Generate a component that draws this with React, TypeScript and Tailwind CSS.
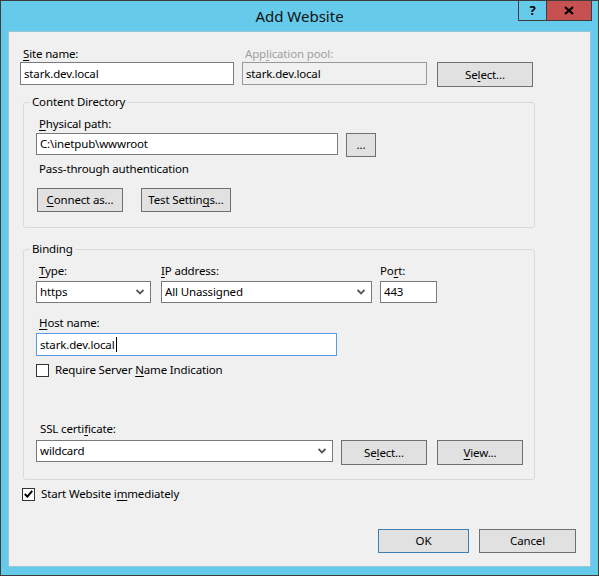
import type { ReactNode } from "react";

const font = { fontFamily: '"Noto Sans", "Open Sans", Arial, sans-serif' };

function U({ children }: { children: ReactNode }) {
  return <span className="underline underline-offset-2">{children}</span>;
}

function Button({
  children,
  className = "",
  primary = false,
}: {
  children: ReactNode;
  className?: string;
  primary?: boolean;
}) {
  return (
    <button
      type="button"
      className={`flex items-center justify-center border bg-[#e1e1e1] text-[11.5px] leading-none tracking-[-0.15px] text-black ${
        primary ? "border-[#3c7fb1]" : "border-[#707070]"
      } ${className}`}
    >
      {children}
    </button>
  );
}

function TextBox({
  value,
  className = "",
  disabled = false,
  focused = false,
}: {
  value: string;
  className?: string;
  disabled?: boolean;
  focused?: boolean;
}) {
  return (
    <div
      className={`flex items-center border pl-[3px] text-black ${
        disabled ? "border-[#9a9a9a] bg-[#f0f0f0]" : "bg-white"
      } ${focused ? "border-[#569de5]" : disabled ? "" : "border-[#7a7a7a]"} ${className}`}
    >
      <span>{value}</span>
      {focused && <span className="ml-px h-[15px] w-px bg-black" />}
    </div>
  );
}

function Combo({ value, className = "" }: { value: string; className?: string }) {
  return (
    <div
      className={`flex items-center justify-between border border-[#7a7a7a] bg-white pl-[3px] pr-[6px] text-black ${className}`}
    >
      <span>{value}</span>
      <svg width="8" height="6" viewBox="0 0 8 6" aria-hidden="true">
        <path d="M0.5 1 L4 4.5 L7.5 1" fill="none" stroke="#555" strokeWidth="1.8" />
      </svg>
    </div>
  );
}

function CheckBox({ checked = false }: { checked?: boolean }) {
  return (
    <span className="flex h-[13px] w-[13px] shrink-0 items-center justify-center border border-[#333] bg-white">
      {checked && (
        <svg width="9" height="8" viewBox="0 0 9 8" aria-hidden="true">
          <path d="M0.8 4 L3.4 6.6 L8.2 0.8" fill="none" stroke="#000" strokeWidth="2" />
        </svg>
      )}
    </span>
  );
}

// Win8-style group box: a fieldset whose legend sits on the top border
function Group({ title, children, className = "" }: { title: string; children: ReactNode; className?: string }) {
  return (
    <fieldset className={`ml-[14px] w-[512px] rounded-[3px] border border-[#d9d9d9] ${className}`}>
      <legend className="-ml-[6px] px-[2px] leading-4 text-black">{title}</legend>
      {children}
    </fieldset>
  );
}

export default function App() {
  return (
    <div className="h-[576px] w-[599px] bg-white" style={font}>
      <div className="flex h-[576px] w-[599px] flex-col border border-[#3d3d3d] bg-[#66cbea]">
        {/* title bar */}
        <div className="grid h-[30px] grid-cols-[1fr_auto_1fr]">
          <div />
          <div className="pt-[5px] text-[15px] leading-5 text-[#111]">Add Website</div>
          <div className="flex items-start justify-end pr-[6px]">
            <div className="flex h-[20px] w-[28px] items-center justify-center border-b border-l border-[#3d3d3d] text-[13px] font-bold leading-none text-black">
              ?
            </div>
            <div className="flex h-[20px] w-[46px] items-center justify-center border-x border-b border-[#3d3d3d] bg-[#c75050]">
              <svg width="10" height="9" viewBox="0 0 10 9" aria-hidden="true">
                <path d="M1 1 L9 8 M9 1 L1 8" stroke="#000" strokeWidth="2.2" />
              </svg>
            </div>
          </div>
        </div>

        {/* client area */}
        <div className="mx-[7px] h-[536px] border border-[#9cc3d6] bg-[#f0f0f0] text-[11.5px] tracking-[-0.15px] text-black">
          <div className="flex items-start pl-[11px] pt-[14px]">
            <div className="flex w-[214px] flex-col">
              <div className="h-4 pl-[3px] leading-4">
                <U>S</U>ite name:
              </div>
              <TextBox value="stark.dev.local" className="h-[23px] w-[214px]" />
            </div>
            <div className="ml-[8px] flex w-[185px] flex-col">
              <div className="h-4 pl-[3px] leading-4 text-[#a0a0a0]">
                App<U>l</U>ication pool:
              </div>
              <TextBox value="stark.dev.local" disabled className="h-[23px] w-[185px]" />
            </div>
            <Button className="ml-[10px] mt-4 h-[25px] w-[96px]">
              Se<U>l</U>ect...
            </Button>
          </div>

          <Group title="Content Directory" className="mt-[7px] pb-[15px] pl-[12px]">
            <div className="mt-[6px] h-4 pl-[3px] leading-4">
              <U>P</U>hysical path:
            </div>
            <div className="mt-px flex items-start gap-[8px]">
              <TextBox value="C:\inetpub\wwwroot" className="h-[22px] w-[302px]" />
              <Button className="h-[24px] w-[30px]">...</Button>
            </div>
            <div className="mt-[4px] h-4 pl-[3px] leading-4">Pass-through authentication</div>
            <div className="ml-px mt-[11px] flex gap-[18px]">
              <Button className="h-[24px] w-[86px]">
                <U>C</U>onnect as...
              </Button>
              <Button className="h-[24px] w-[90px]">
                Test Settin<U>g</U>s...
              </Button>
            </div>
          </Group>

          <Group title="Binding" className="mt-[13px] pb-[14px] pl-[12px]">
            <div className="mt-[6px] flex items-start">
              <div className="flex w-[115px] flex-col">
                <div className="h-4 pl-[3px] leading-4">
                  <U>T</U>ype:
                </div>
                <Combo value="https" className="mt-[2px] h-[22px] w-[115px]" />
              </div>
              <div className="ml-[10px] flex w-[211px] flex-col">
                <div className="h-4 leading-4">
                  <U>I</U>P address:
                </div>
                <Combo value="All Unassigned" className="mt-[2px] h-[22px] w-[211px]" />
              </div>
              <div className="ml-[8px] flex w-[57px] flex-col">
                <div className="h-4 leading-4">
                  Po<U>r</U>t:
                </div>
                <TextBox value="443" className="mt-[2px] h-[22px] w-[57px]" />
              </div>
            </div>
            <div className="mt-[12px] h-4 pl-[3px] leading-4">
              <U>H</U>ost name:
            </div>
            <TextBox value="stark.dev.local" focused className="mt-[2px] h-[23px] w-[301px]" />
            <div className="mt-[6px] flex h-4 items-center gap-[6px]">
              <CheckBox />
              <span>
                Require Server <U>N</U>ame Indication
              </span>
            </div>
            <div className="mt-[43px] h-4 pl-[4px] leading-4">
              SSL certi<U>f</U>icate:
            </div>
            <div className="mt-[3px] flex items-start">
              <Combo value="wildcard" className="h-[22px] w-[297px]" />
              <Button className="ml-[8px] h-[25px] w-[86px]">
                Se<U>l</U>ect...
              </Button>
              <Button className="ml-[10px] h-[25px] w-[86px]">
                <U>V</U>iew...
              </Button>
            </div>
          </Group>

          <div className="ml-[13px] mt-[6px] flex h-4 items-center gap-[6px]">
            <CheckBox checked />
            <span>
              Start Website i<U>m</U>mediately
            </span>
          </div>

          <div className="mt-[27px] flex justify-end gap-[10px] pr-[14px]">
            <Button primary className="h-[24px] w-[91px]">
              OK
            </Button>
            <Button className="h-[24px] w-[97px]">Cancel</Button>
          </div>
        </div>
      </div>
    </div>
  );
}
